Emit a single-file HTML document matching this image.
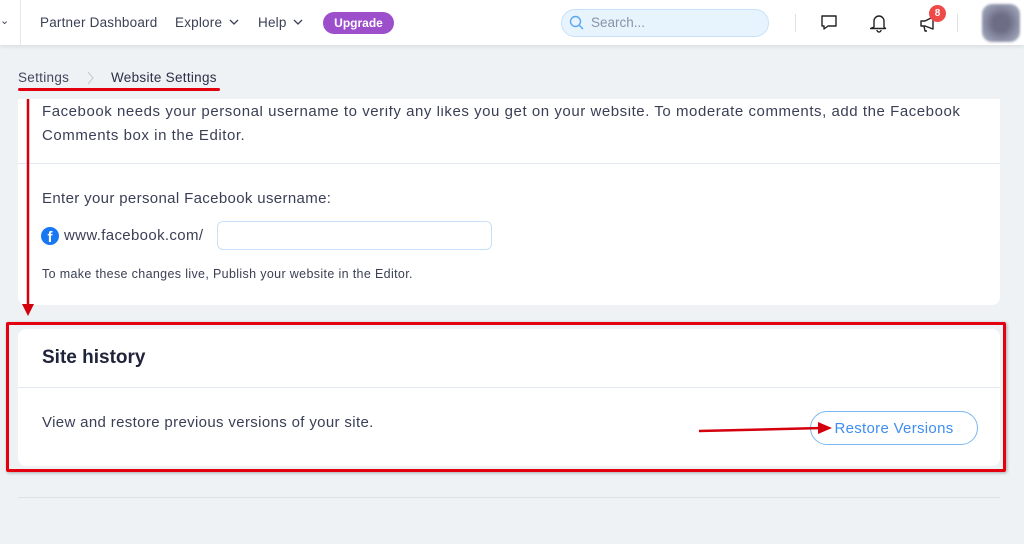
<!DOCTYPE html>
<html><head><style>
body{margin:0;width:1024px;height:544px;overflow:hidden;background:#eef2f5;font-family:"Liberation Sans",sans-serif;color:#333853;position:relative}
.a{position:absolute}
.hdr{left:0;top:0;width:1024px;height:45px;background:#fff;box-shadow:0 2px 4px rgba(0,0,0,.08)}
.nav{font-size:13.5px;color:#3b3f55;top:15px;letter-spacing:.2px}
.card{background:#fff;border-radius:8px;left:18px;width:982px}
.t{letter-spacing:.35px}
</style></head><body>
<div class="a hdr"></div>
<div class="a" style="left:20px;top:0;width:1px;height:45px;background:#e5e8ee"></div>
<div class="a nav" style="left:0;top:14px;font-size:11px">⌄</div>
<div class="a nav" style="left:40px">Partner Dashboard</div>
<div class="a nav" style="left:175px">Explore</div>
<svg class="a" style="left:229px;top:19px" width="10" height="7"><path d="M1 1l4 4 4-4" stroke="#3b3f55" fill="none" stroke-width="1.3"/></svg>
<div class="a nav" style="left:258px">Help</div>
<svg class="a" style="left:293px;top:19px" width="10" height="7"><path d="M1 1l4 4 4-4" stroke="#3b3f55" fill="none" stroke-width="1.3"/></svg>
<div class="a" style="left:323px;top:12px;width:71px;height:22px;border-radius:11px;background:#9d4fcb;color:#fff;font-size:12px;font-weight:bold;text-align:center;line-height:22px">Upgrade</div>
<div class="a" style="left:561px;top:9px;width:206px;height:26px;border-radius:14px;background:#e7f3fd;border:1px solid #c5e2fa"></div>
<svg class="a" style="left:569px;top:15px" width="16" height="16"><circle cx="6.5" cy="6.5" r="5" stroke="#5aa8ef" fill="none" stroke-width="1.4"/><path d="M10 10l4 4" stroke="#5aa8ef" stroke-width="1.4"/></svg>
<div class="a" style="left:591px;top:15px;font-size:13.5px;color:#8a93a8">Search...</div>
<div class="a" style="left:795px;top:14px;width:1px;height:18px;background:#dde0e6"></div>
<svg class="a" style="left:820px;top:14px" width="18" height="18"><path d="M2 2h14v10H8l-4 3v-3H2z" stroke="#222" fill="none" stroke-width="1.4" stroke-linejoin="round"/></svg>
<svg class="a" style="left:870px;top:13px" width="18" height="20"><path d="M4 14V8a5 5 0 0110 0v6l1.5 1.5h-15z M7 17a2 2 0 004 0" stroke="#222" fill="none" stroke-width="1.4" stroke-linejoin="round"/></svg>
<svg class="a" style="left:919px;top:15px" width="18" height="18"><path d="M2 6h4l8-4v12l-8-3H2z M5 11l1 5h2" stroke="#222" fill="none" stroke-width="1.4" stroke-linejoin="round"/></svg>
<div class="a" style="left:929px;top:5px;width:17px;height:17px;border-radius:50%;background:#ee4b48;color:#fff;font-size:10px;font-weight:bold;text-align:center;line-height:17px">8</div>
<div class="a" style="left:957px;top:14px;width:1px;height:18px;background:#dde0e6"></div>
<div class="a" style="left:982px;top:4px;width:38px;height:38px;border-radius:10px;background:radial-gradient(circle,#6d6d85 30%,#9ea3b8 80%,#dfe1e8);filter:blur(1px)"></div>

<div class="a t" style="left:18px;top:70px;font-size:13.5px;color:#44485c;letter-spacing:.3px">Settings</div>
<svg class="a" style="left:87px;top:71px" width="8" height="14"><path d="M1 1l5 6-5 6" stroke="#c4c8d2" fill="none"/></svg>
<div class="a" style="left:111px;top:70px;font-size:13.5px;color:#2b2f45;letter-spacing:.3px">Website Settings</div>
<div class="a" style="left:18px;top:88px;width:202px;height:3px;background:#e3000f;border-radius:2px"></div>

<div class="a card" style="top:50px;height:255px;border-radius:0 0 8px 8px;clip-path:inset(49px 0 0 0)"></div>
<div class="a t" style="left:42px;top:100px;font-size:15px;color:#3b3f55;line-height:24px;clip-path:inset(6px 0 0 0);letter-spacing:.55px">Facebook needs your personal username to verify any likes you get on your website. To moderate comments, add the Facebook<br>Comments box in the Editor.</div>
<div class="a" style="left:18px;top:163px;width:982px;height:1px;background:#e3e7ee"></div>
<div class="a t" style="left:42px;top:190px;font-size:15px;color:#3b3f55">Enter your personal Facebook username:</div>
<div class="a" style="left:41px;top:227px;width:18px;height:18px;border-radius:50%;background:#1877f2;color:#fff;font-weight:bold;font-size:15px;text-align:center;line-height:21px;overflow:hidden">f</div>
<div class="a t" style="left:64px;top:227px;font-size:15px;color:#3b3f55">www.facebook.com/</div>
<div class="a" style="left:217px;top:221px;width:273px;height:27px;border:1px solid #c9e1f6;border-radius:6px;background:#fff"></div>
<div class="a t" style="left:42px;top:267px;font-size:12.5px;color:#3b3f55">To make these changes live, Publish your website in the Editor.</div>

<div class="a card" style="top:329px;height:137px"></div>
<div class="a" style="left:42px;top:347px;font-size:19px;font-weight:bold;color:#20243a">Site history</div>
<div class="a" style="left:18px;top:387px;width:982px;height:1px;background:#e3e7ee"></div>
<div class="a t" style="left:42px;top:414px;font-size:15px;color:#3b3f55">View and restore previous versions of your site.</div>
<div class="a" style="left:810px;top:411px;width:166px;height:32px;border:1px solid #7ab8f2;border-radius:17px;background:#fff;color:#3f8ef0;font-size:15px;text-align:center;line-height:33px;letter-spacing:.3px">Restore Versions</div>
<div class="a" style="left:18px;top:497px;width:982px;height:1px;background:#dde1e7"></div>

<div class="a" style="left:6px;top:322px;width:994px;height:144px;border:3px solid #e3000f;border-radius:2px;box-shadow:1px 1px 3px rgba(0,0,0,.3)"></div>
<svg class="a" style="left:0;top:0" width="1024" height="544">
<path d="M28 99V306" stroke="#d4000e" stroke-width="2.5"/><path d="M22 304l6 12 6-12z" fill="#d4000e"/>
<path d="M699 431L822 428" stroke="#d4000e" stroke-width="2.5"/><path d="M818 422l14 6-14 6z" fill="#d4000e"/>
</svg>
</body></html>
